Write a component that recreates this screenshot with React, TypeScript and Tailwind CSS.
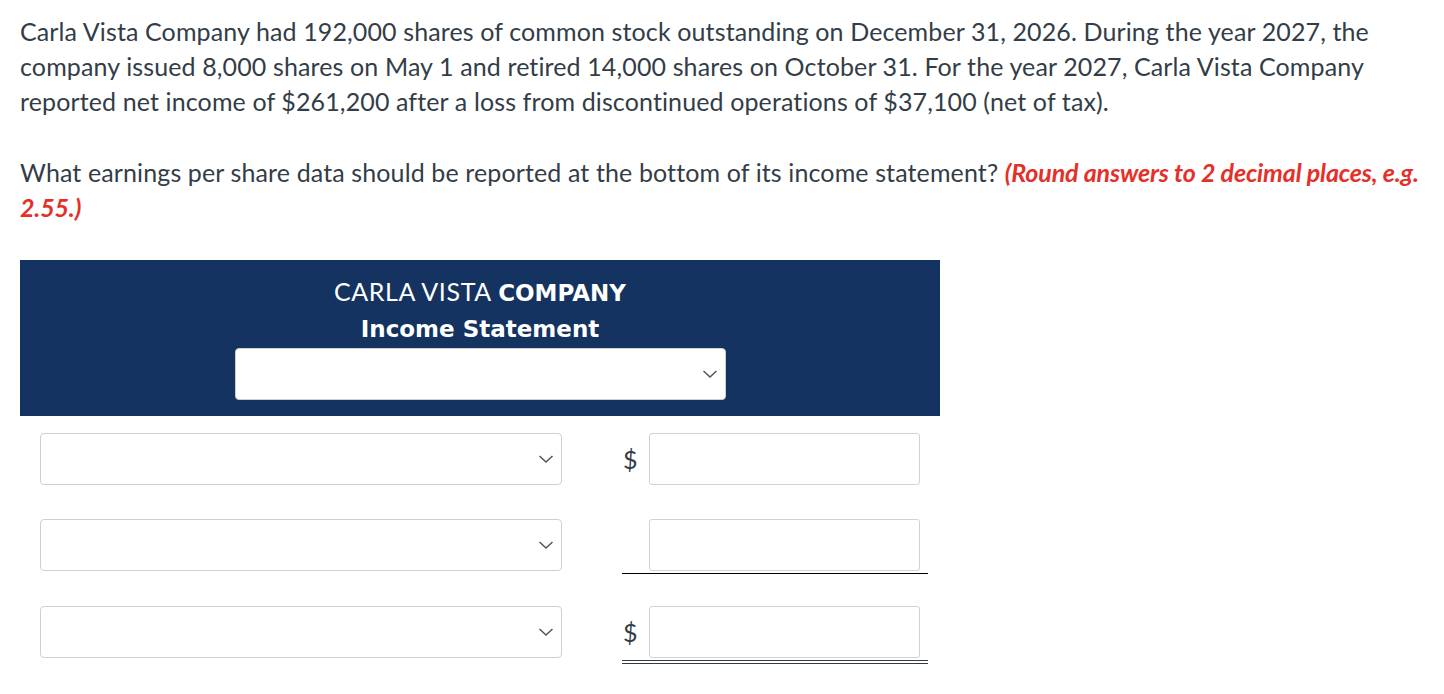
import React from "react";

const Chevron = () => (
  <svg
    className="absolute right-[7px] top-1/2 -translate-y-1/2"
    width="16"
    height="10"
    viewBox="0 0 16 10"
    fill="none"
  >
    <path d="M1.5 2 L8 8 L14.5 2" stroke="#555555" strokeWidth="1.5" />
  </svg>
);

const SelectBox = ({ className }: { className: string }) => (
  <div
    className={`relative h-[52px] rounded-[4px] border border-[#cfcfcf] bg-white ${className}`}
  >
    <Chevron />
  </div>
);

const InputBox = () => (
  <div className="h-[52px] w-[271px] rounded-[3px] border border-[#d2d2d2] bg-white" />
);

const App: React.FC = () => {
  return (
    <div
      className="min-h-screen bg-white px-[20px] pt-[14px] text-[25px] leading-[35px] tracking-[0.12px] text-[#333d47]"
      style={{ fontFamily: "Lato, 'Open Sans', sans-serif" }}
    >
      <p>
        Carla Vista Company had 192,000 shares of common stock outstanding on
        December 31, 2026. During the year 2027, the company issued 8,000 shares
        on May 1 and retired 14,000 shares on October 31. For the year 2027,
        Carla Vista Company reported net income of $261,200 after a loss from
        discontinued operations of $37,100 (net of tax).
      </p>

      <p className="mt-[36px] max-w-[1404px]">
        What earnings per share data should be reported at the bottom of its
        income statement?{" "}
        <span className="font-bold italic tracking-[-0.15px] text-[#e5302a]">
          (Round answers to 2 decimal places, e.g. 2.55.)
        </span>
      </p>

      {/* Statement */}
      <div className="mt-[35px] w-[920px]">
        <div className="flex h-[156px] flex-col items-center bg-[#143360] pt-[13px] text-white">
          <div className="leading-[36px] tracking-normal">
            <span className="tracking-[0.6px]">CARLA VISTA</span>{" "}
            <span
              className="font-bold text-[23px]"
              style={{ fontFamily: "'DejaVu Sans', Verdana, sans-serif" }}
            >
              COMPANY
            </span>
          </div>
          <div
            className="font-bold text-[23px] leading-[36px] tracking-normal"
            style={{ fontFamily: "'DejaVu Sans', Verdana, sans-serif" }}
          >
            Income Statement
          </div>
          <SelectBox className="mt-[1px] w-[491px]" />
        </div>

        <div className="pl-[20px] pt-[17px]">
          {/* row 1 */}
          <div className="flex items-start">
            <SelectBox className="w-[522px]" />
            <div className="ml-[60px] flex w-[306px] items-center">
              <span className="w-[27px] pl-[1px]">$</span>
              <InputBox />
            </div>
          </div>

          {/* row 2 */}
          <div className="mt-[34px] flex items-start">
            <SelectBox className="w-[522px]" />
            <div className="ml-[60px] flex w-[306px] items-center border-b border-black pb-[2px]">
              <span className="w-[27px]" />
              <InputBox />
            </div>
          </div>

          {/* row 3 */}
          <div className="mt-[32px] flex items-start">
            <SelectBox className="w-[522px]" />
            <div className="ml-[60px] flex w-[306px] items-center border-b-4 border-double border-[#333d47] pb-[2px]">
              <span className="w-[27px] pl-[1px]">$</span>
              <InputBox />
            </div>
          </div>
        </div>
      </div>
    </div>
  );
};

export default App;
